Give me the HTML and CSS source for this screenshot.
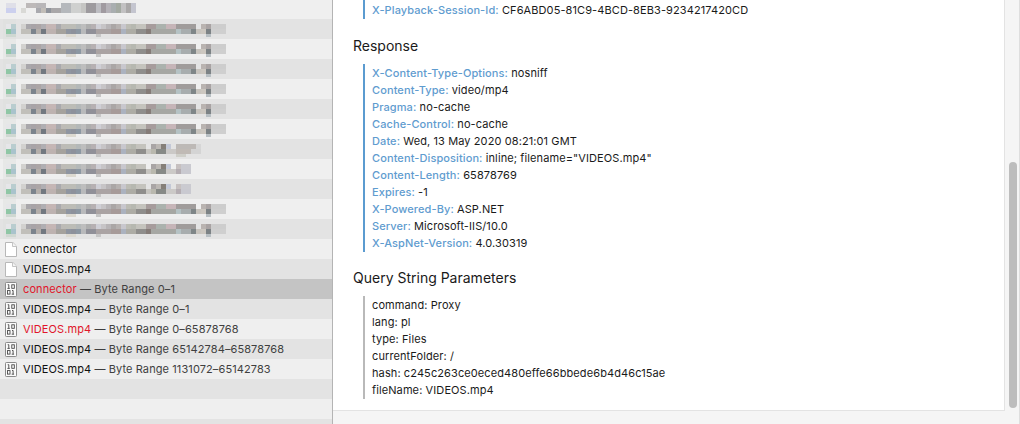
FILE: index.html
```html
<!DOCTYPE html>
<html lang="en">
<head>
<meta charset="utf-8">
<title>Network request details</title>
<link rel="stylesheet" href="styles.css">
</head>
<body>
<svg class="defs" width="0" height="0" aria-hidden="true">
  <symbol id="ic-doc" viewBox="0 0 12 15">
    <path d="M.5.5h7.4l3.6 3.6v10.4H.5z" fill="#fff" stroke="#b8b8b8"/>
    <path d="M7.5.5v4h4" fill="#f4f4f4" stroke="#c4c4c4"/>
  </symbol>
  <symbol id="ic-bin" viewBox="0 0 12 15">
    <rect x=".5" y=".5" width="11" height="14" rx=".8" fill="#fbfbfb" stroke="#8a8a8a"/>
    <path d="M2.7 2.7h1.1v3.6M2.4 6.4h2.4" fill="none" stroke="#3c3c3c" stroke-width=".85"/>
    <rect x="6.8" y="2.8" width="2.5" height="3.5" fill="none" stroke="#3c3c3c" stroke-width=".85"/>
    <rect x="2.5" y="8.6" width="2.5" height="3.5" fill="none" stroke="#3c3c3c" stroke-width=".85"/>
    <path d="M7 8.5h1.1v3.6M6.7 12.2h2.4" fill="none" stroke="#3c3c3c" stroke-width=".85"/>
  </symbol>
  <g id="blur-icon">
    <rect x="3" y="0" width="13" height="20" fill="#d9dcdb" opacity=".35"/>
    <rect x="6" y="5" width="5" height="5" fill="#e6e6e9"/><rect x="11" y="5" width="5" height="5" fill="#b9cdcf"/>
    <rect x="6" y="10" width="5" height="5" fill="#8fc6a5"/><rect x="11" y="10" width="5" height="5" fill="#a9c3cc"/>
    <rect x="6" y="15" width="10" height="3" fill="#cfd8d2"/>
  </g>
  <g id="blur-head">
    <rect x="21" y="5" width="5" height="5" fill="#d2d1cf"/><rect x="26" y="5" width="5" height="5" fill="#a9a7ab"/><rect x="31" y="5" width="5" height="5" fill="#a8a3a7"/><rect x="36" y="5" width="5" height="5" fill="#aca5a6"/><rect x="41" y="5" width="5" height="5" fill="#b0aeb2"/><rect x="46" y="5" width="10" height="5" fill="#c5b6b5"/><rect x="56" y="5" width="5" height="5" fill="#a9a9ad"/><rect x="61" y="5" width="5" height="5" fill="#bdbbb6"/><rect x="66" y="5" width="10" height="5" fill="#bcbcb6"/><rect x="76" y="5" width="5" height="5" fill="#b4b8b8"/><rect x="81" y="5" width="5" height="5" fill="#bdbdbd"/><rect x="86" y="5" width="5" height="5" fill="#aeaeae"/><rect x="91" y="5" width="5" height="5" fill="#b6b0b2"/><rect x="96" y="5" width="5" height="5" fill="#cfcfd6"/><rect x="101" y="5" width="5" height="5" fill="#c6c4c6"/><rect x="106" y="5" width="5" height="5" fill="#b7b4b6"/><rect x="111" y="5" width="5" height="5" fill="#aaa6a5"/><rect x="116" y="5" width="5" height="5" fill="#b6b1af"/><rect x="121" y="5" width="5" height="5" fill="#c8c7cd"/><rect x="126" y="5" width="5" height="5" fill="#bcbcb4"/><rect x="131" y="5" width="5" height="5" fill="#b6b8b0"/><rect x="136" y="5" width="10" height="5" fill="#c4c3bd"/>
    <rect x="21" y="10" width="10" height="5" fill="#c1bfba"/><rect x="31" y="10" width="5" height="5" fill="#7b838c"/><rect x="36" y="10" width="5" height="5" fill="#b4aeaa"/><rect x="41" y="10" width="5" height="5" fill="#727880"/><rect x="46" y="10" width="10" height="5" fill="#bdb2b0"/><rect x="56" y="10" width="10" height="5" fill="#a5a29d"/><rect x="66" y="10" width="5" height="5" fill="#8f95a0"/><rect x="71" y="10" width="5" height="5" fill="#8d919b"/><rect x="76" y="10" width="5" height="5" fill="#8c97a2"/><rect x="81" y="10" width="5" height="5" fill="#b8b9bb"/><rect x="86" y="10" width="10" height="5" fill="#909098"/><rect x="96" y="10" width="15" height="5" fill="#aaa3a3"/><rect x="111" y="10" width="10" height="5" fill="#a79b99"/><rect x="121" y="10" width="5" height="5" fill="#abb2bf"/><rect x="126" y="10" width="10" height="5" fill="#adaca5"/><rect x="136" y="10" width="10" height="5" fill="#8f8e8c"/>
    <rect x="66" y="15" width="10" height="3" fill="#dcd9d0"/><rect x="96" y="15" width="5" height="3" fill="#c6c6c6"/>
  </g>
  <symbol id="blur-long" viewBox="0 0 240 20">
    <use href="#blur-icon"/><use href="#blur-head"/>
    <rect x="146" y="5" width="10" height="5" fill="#a69c9c"/><rect x="156" y="5" width="10" height="5" fill="#abb2ad"/><rect x="166" y="5" width="10" height="5" fill="#c6b5b8"/><rect x="176" y="5" width="20" height="5" fill="#a09c9b"/><rect x="201" y="5" width="5" height="5" fill="#b9b3b0"/><rect x="206" y="5" width="5" height="5" fill="#a9a3a3"/><rect x="211" y="5" width="15" height="5" fill="#cdcdcd"/>
    <rect x="146" y="10" width="5" height="5" fill="#857c78"/><rect x="151" y="10" width="25" height="5" fill="#a6a7a3"/><rect x="176" y="10" width="5" height="5" fill="#b5c2c4"/><rect x="181" y="10" width="10" height="5" fill="#a8adae"/><rect x="191" y="10" width="5" height="5" fill="#7f8688"/><rect x="196" y="10" width="5" height="5" fill="#c8c4be"/><rect x="201" y="10" width="5" height="5" fill="#ccc7c0"/><rect x="206" y="10" width="5" height="5" fill="#7c8285"/><rect x="211" y="10" width="15" height="5" fill="#cfcfcf"/>
    <rect x="206" y="15" width="5" height="3" fill="#b8bfc3"/>
  </symbol>
  <symbol id="blur-mid" viewBox="0 0 240 20">
    <use href="#blur-icon"/><use href="#blur-head"/>
    <rect x="151" y="5" width="5" height="5" fill="#a9a5a5"/><rect x="156" y="5" width="5" height="5" fill="#bcb8b4"/><rect x="161" y="5" width="5" height="5" fill="#857f78"/><rect x="166" y="5" width="5" height="5" fill="#c3c8d6"/><rect x="176" y="5" width="20" height="5" fill="#bdb9b6"/><rect x="196" y="5" width="5" height="5" fill="#d6d6d6"/>
    <rect x="146" y="10" width="5" height="5" fill="#c6c4bf"/><rect x="151" y="10" width="5" height="5" fill="#b9b8ae"/><rect x="156" y="10" width="10" height="5" fill="#878a87"/><rect x="166" y="10" width="10" height="5" fill="#cbc9c7"/><rect x="176" y="10" width="15" height="5" fill="#c0bab5"/><rect x="191" y="10" width="10" height="5" fill="#d4d4d4"/>
    <rect x="176" y="15" width="10" height="3" fill="#cfcfc9"/>
  </symbol>
  <symbol id="blur-short" viewBox="0 0 240 20">
    <use href="#blur-icon"/><use href="#blur-head"/>
    <rect x="151" y="5" width="5" height="5" fill="#a9a5a5"/><rect x="156" y="5" width="5" height="5" fill="#bcb8b4"/><rect x="161" y="5" width="5" height="5" fill="#857f78"/><rect x="166" y="5" width="5" height="5" fill="#c3c8d6"/><rect x="176" y="5" width="5" height="5" fill="#c6c0c0"/><rect x="181" y="5" width="10" height="5" fill="#cacad0"/>
    <rect x="146" y="10" width="5" height="5" fill="#c6c4bf"/><rect x="151" y="10" width="5" height="5" fill="#b9b8ae"/><rect x="156" y="10" width="10" height="5" fill="#878a87"/><rect x="166" y="10" width="10" height="5" fill="#cbc9c7"/><rect x="176" y="10" width="5" height="5" fill="#b4adb2"/><rect x="181" y="10" width="10" height="5" fill="#c9c9d0"/>
  </symbol>
  <symbol id="blur-first" viewBox="0 0 240 20">
    <rect x="6" y="4" width="10" height="5" fill="#dfdfe8"/><rect x="6" y="9" width="10" height="5" fill="#ccd0ee"/>
    <rect x="21" y="9" width="5" height="5" fill="#d9d9d6"/><rect x="26" y="4" width="10" height="5" fill="#bdb9b9"/><rect x="36" y="4" width="10" height="5" fill="#b8b6b8"/><rect x="36" y="9" width="5" height="5" fill="#a9a9ae"/><rect x="41" y="9" width="5" height="5" fill="#c1bdb8"/><rect x="46" y="9" width="5" height="5" fill="#8f939b"/><rect x="51" y="9" width="10" height="5" fill="#a9a7a9"/><rect x="61" y="4" width="10" height="10" fill="#b5b8bc"/><rect x="71" y="4" width="10" height="10" fill="#cfd0cf"/><rect x="81" y="4" width="5" height="10" fill="#c5c5c3"/><rect x="86" y="4" width="10" height="10" fill="#9d9a9e"/><rect x="96" y="4" width="5" height="10" fill="#bdbdc2"/><rect x="101" y="4" width="5" height="10" fill="#a09aa0"/><rect x="106" y="4" width="5" height="10" fill="#b5b2b8"/><rect x="111" y="4" width="5" height="10" fill="#a9aeb0"/><rect x="116" y="4" width="5" height="10" fill="#a4aaa2"/><rect x="121" y="4" width="5" height="10" fill="#c2c1c2"/><rect x="126" y="4" width="5" height="10" fill="#aaa8a8"/><rect x="131" y="4" width="5" height="10" fill="#c4c5cf"/>
  </symbol>
</svg>
<div class="app">
  <aside class="list">
    <div class="row blank"><svg class="blur"><use href="#blur-first"/></svg></div>
    <div class="row blank"><svg class="blur"><use href="#blur-long"/></svg></div>
    <div class="row blank"><svg class="blur"><use href="#blur-long"/></svg></div>
    <div class="row blank"><svg class="blur"><use href="#blur-long"/></svg></div>
    <div class="row blank"><svg class="blur"><use href="#blur-long"/></svg></div>
    <div class="row blank"><svg class="blur"><use href="#blur-long"/></svg></div>
    <div class="row blank"><svg class="blur"><use href="#blur-long"/></svg></div>
    <div class="row blank"><svg class="blur"><use href="#blur-mid"/></svg></div>
    <div class="row blank"><svg class="blur"><use href="#blur-short"/></svg></div>
    <div class="row blank"><svg class="blur"><use href="#blur-short"/></svg></div>
    <div class="row blank"><svg class="blur"><use href="#blur-long"/></svg></div>
    <div class="row blank"><svg class="blur"><use href="#blur-long"/></svg></div>
    <div class="row"><svg class="ic"><use href="#ic-doc"/></svg><span class="name">connector</span></div>
    <div class="row"><svg class="ic"><use href="#ic-doc"/></svg><span class="name">VIDEOS.mp4</span></div>
    <div class="row sel"><svg class="ic"><use href="#ic-bin"/></svg><span class="name err">connector</span><span class="sub">&nbsp;— Byte Range 0–1</span></div>
    <div class="row"><svg class="ic"><use href="#ic-bin"/></svg><span class="name">VIDEOS.mp4</span><span class="sub">&nbsp;— Byte Range 0–1</span></div>
    <div class="row"><svg class="ic"><use href="#ic-bin"/></svg><span class="name err">VIDEOS.mp4</span><span class="sub">&nbsp;— Byte Range 0–65878768</span></div>
    <div class="row"><svg class="ic"><use href="#ic-bin"/></svg><span class="name">VIDEOS.mp4</span><span class="sub">&nbsp;— Byte Range 65142784–65878768</span></div>
    <div class="row"><svg class="ic"><use href="#ic-bin"/></svg><span class="name">VIDEOS.mp4</span><span class="sub">&nbsp;— Byte Range 1131072–65142783</span></div>
    <div class="row"></div>
    <div class="row"></div>
    <div class="row"></div>
  </aside>
  <main class="detail">
    <div class="sheet">
      <ul class="kv blue first">
        <li><b>X-Playback-Session-Id:</b> CF6ABD05-81C9-4BCD-8EB3-9234217420CD</li>
      </ul>
      <h2>Response</h2>
      <ul class="kv blue">
        <li><b>X-Content-Type-Options:</b> nosniff</li>
        <li><b>Content-Type:</b> video/mp4</li>
        <li><b>Pragma:</b> no-cache</li>
        <li><b>Cache-Control:</b> no-cache</li>
        <li><b>Date:</b> Wed, 13 May 2020 08:21:01 GMT</li>
        <li><b>Content-Disposition:</b> inline; filename="VIDEOS.mp4"</li>
        <li><b>Content-Length:</b> 65878769</li>
        <li><b>Expires:</b> -1</li>
        <li><b>X-Powered-By:</b> ASP.NET</li>
        <li><b>Server:</b> Microsoft-IIS/10.0</li>
        <li><b>X-AspNet-Version:</b> 4.0.30319</li>
      </ul>
      <h2>Query String Parameters</h2>
      <ul class="kv gray">
        <li><b>command:</b> Proxy</li>
        <li><b>lang:</b> pl</li>
        <li><b>type:</b> Files</li>
        <li><b>currentFolder:</b> /</li>
        <li><b>hash:</b> c245c263ce0eced480effe66bbede6b4d46c15ae</li>
        <li><b>fileName:</b> VIDEOS.mp4</li>
      </ul>
    </div>
    <div class="track"><div class="thumb"></div></div>
  </main>
</div>
</body>
</html>
```

FILE: styles.css
```css
* { box-sizing: border-box; }
html, body { margin: 0; height: 424px; overflow: hidden; }
body { font-family: "Inter", "Liberation Sans", Arial, sans-serif; font-size: 11px; letter-spacing: .1px; color: #1a1a1a; background: #f5f5f5; }
.defs { position: absolute; }
.app { display: flex; height: 424px; }
.list { width: 333px; flex: none; margin-top: -1px; border-right: 1px solid #b4b4b4; background: #efefef; overflow: hidden; }
.row { height: 20px; display: flex; align-items: center; padding-left: 5px; background: #efefef; white-space: nowrap; }
.row:nth-child(even) { background: #e3e3e3; }
.row.sel { background: #c4c4c4; }
.row.blank { padding-left: 0; }
.ic { width: 12px; height: 15px; flex: none; margin-right: 6px; }
.blur { width: 240px; height: 20px; }
.name { color: #111; }
.name.err { color: #e0162b; }
.sub { color: #3f3f3f; }
.detail { flex: 1; display: flex; min-width: 0; }
.sheet { width: 672px; flex: none; height: 411px; background: #fff; border-right: 1px solid #e3e3e3; border-bottom: 1px solid #e3e3e3; padding-left: 20px; overflow: hidden; }
.track { flex: 1; position: relative; border-right: 1px solid #dedede; }
.thumb { position: absolute; left: 4px; top: 162px; width: 8px; height: 246px; border-radius: 4px; background: #bdbdbd; }
h2 { margin: 0; font-size: 14px; font-weight: 400; line-height: 17px; letter-spacing: 0; color: #1a1a1a; }
.kv { list-style: none; margin: 10px 0 18px 10px; padding: 1px 0 0 7px; border-left: 2px solid #5b9bd0; }
.kv.first { margin-top: 0; padding-top: 2px; margin-bottom: 18px; }
.kv.gray { border-left-color: #b9b9b9; }
.kv li { line-height: 17px; white-space: nowrap; }
.kv li:last-child { margin-bottom: -1px; }
.kv.first li:last-child { margin-bottom: 0; }
.kv b { font-weight: 500; }
.kv.gray b { font-weight: 400; }
.kv.blue b { color: #5f9ccf; }
```
